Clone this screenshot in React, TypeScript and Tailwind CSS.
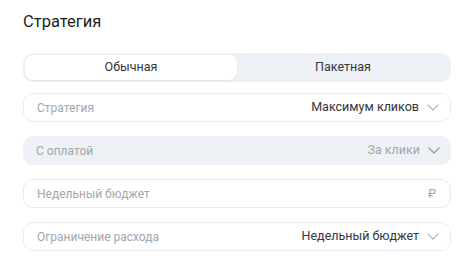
import React from 'react';

const font = { fontFamily: 'Roboto, "Noto Sans", sans-serif' };

function Chevron({ className = '' }: { className?: string }) {
  return (
    <svg width="12" height="7" viewBox="0 0 12 7" fill="none" className={className}>
      <path d="M0.8 0.8l5.2 5.2 5.2-5.2" stroke="currentColor" strokeWidth="1.2" strokeLinecap="round" strokeLinejoin="round" />
    </svg>
  );
}

function Field({
  label,
  value,
  muted,
  chevron = true,
  suffix,
}: {
  label: string;
  value?: string;
  muted?: boolean;
  chevron?: boolean;
  suffix?: string;
}) {
  return (
    <div
      className={`h-[29px] rounded-[10px] flex items-center pl-[13px] pr-[11px] text-[12px] ${
        muted ? 'bg-[#eef1f6]' : 'bg-white border border-[#e9ebef]'
      }`}
    >
      <span className="text-[#a2a6ad] flex-1">{label}</span>
      {value && (
        <span className={`${muted ? 'text-[#a2a6ad]' : 'text-[#34363b]'} text-[12.5px] mr-[8px]`}>{value}</span>
      )}
      {chevron && <Chevron className={muted ? 'text-[#8f949b]' : 'text-[#b3b7bd]'} />}
      {suffix && <span className="text-[#a2a6ad] text-[12px] mr-[3px]">{suffix}</span>}
    </div>
  );
}

export default function App() {
  return (
    <div className="w-[474px] h-[264px] bg-white px-[23px] pt-[10px]" style={font}>
      <h1 className="text-[16.5px] text-[#1e1f22] leading-[24px] font-normal">Стратегия</h1>
      <div className="mt-[19px] h-[29px] rounded-[10px] bg-[#eef1f6] p-[2px] flex text-[12.5px]">
        <div className="flex-1 rounded-[8px] bg-white shadow-[0_1px_2px_rgba(0,0,0,0.06)] flex items-center justify-center text-[#34363b]">
          Обычная
        </div>
        <div className="flex-1 flex items-center justify-center text-[#34363b]">Пакетная</div>
      </div>
      <div className="mt-[11px] flex flex-col gap-[14px]">
        <Field label="Стратегия" value="Максимум кликов" />
        <Field label="С оплатой" value="За клики" muted />
        <Field label="Недельный бюджет" chevron={false} suffix="₽" />
        <Field label="Ограничение расхода" value="Недельный бюджет" />
      </div>
    </div>
  );
}
